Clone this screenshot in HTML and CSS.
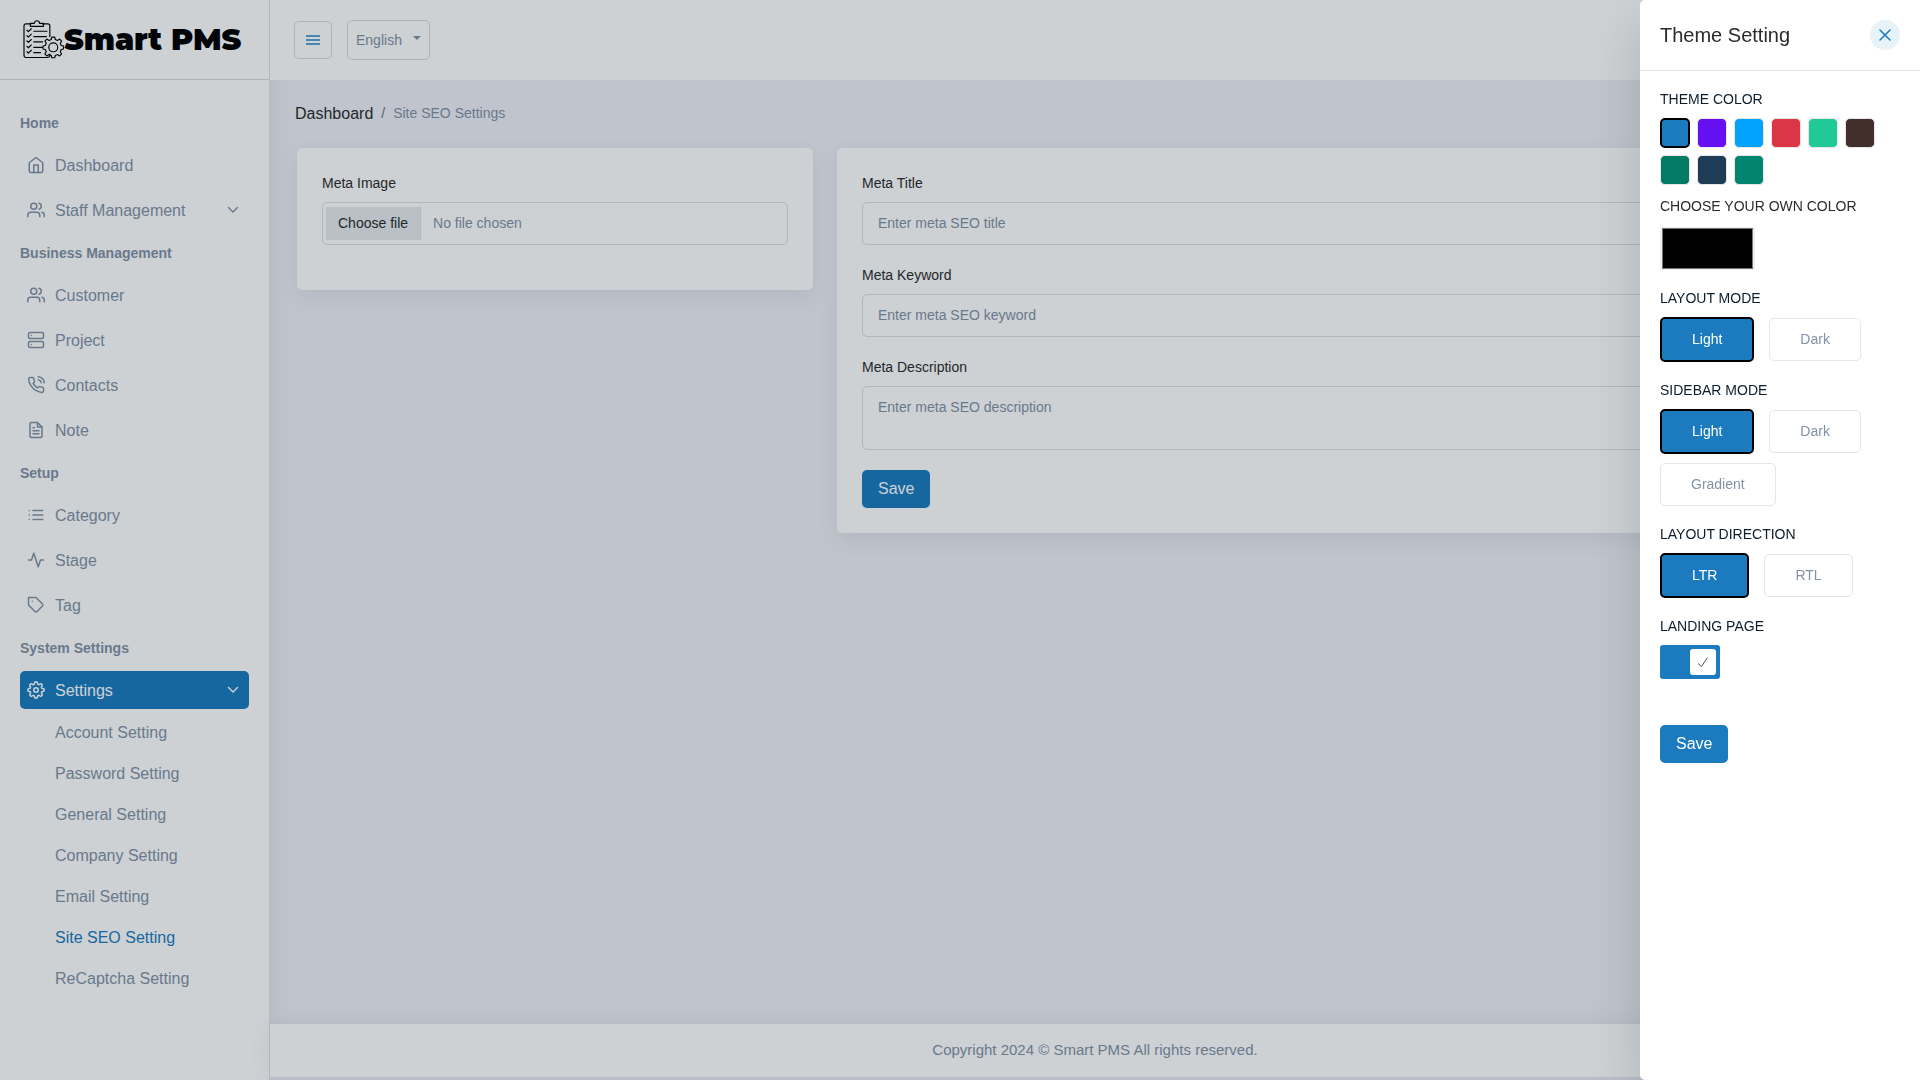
FILE: index.html
```html
<!DOCTYPE html>
<html lang="en-GB">
<head>
<meta charset="utf-8">
<meta name="viewport" content="width=device-width, initial-scale=1">
<title>Smart PMS - Site SEO Settings</title>
<link rel="stylesheet" href="styles.css">
</head>
<body>
<div class="app">
  <aside class="sidebar">
    <a class="brand" href="#">
      <svg class="brand-icon" viewBox="0 0 42 40" fill="none" stroke="currentColor" stroke-width="1.2" stroke-linejoin="round" stroke-linecap="round">
        <path d="M8 4H3Q1 4 1 6V36Q1 38.500 3 38.500H25Q27.500 38.500 27.500 36V35M20 4H25.500Q27.500 4 27.500 6V17"/>
        <path d="M7.500 6.500V3.500H11.500Q12 .8 14.300 .8T17 3.500H21V6.500Z"/>
        <path d="M4 10.500l1.500 1.500L8.500 9M4 16l1.500 1.500L8.500 14.500M4 21.500l1.500 1.500L8.500 20M4 27l1.500 1.500L8.500 25.500M4 32.500l1.500 1.500L8.500 31M11 11.500H24.500M11 17H24M11 22.500H20M11 28H20M11 33.500H18"/>
        <path d="M29.500 17.500h3l.6 2.500 2.200 1 2.300-1.400 2 2-1.400 2.300 1 2.200 2.300.6v3l-2.300.6-1 2.200 1.400 2.300-2 2-2.300-1.400-2.200 1-.6 2.300h-3l-.6-2.300-2.200-1-2.300 1.400-2-2 1.400-2.300-1-2.200-2.300-.6v-3l2.300-.6 1-2.200-1.400-2.300 2-2 2.300 1.400 2.200-1Z"/>
        <circle cx="31" cy="28" r="4.600"/>
      </svg>
      <span class="brand-name">Smart PMS</span>
    </a>
    <nav class="menu">
      <h6 class="menu-title">Home</h6>
      <a class="menu-link" href="#"><svg class="icon" viewBox="0 0 24 24"><path d="M3 9l9-7 9 7v11a2 2 0 0 1-2 2H5a2 2 0 0 1-2-2z"/><path d="M9 22V12h6v10"/></svg><span>Dashboard</span></a>
      <a class="menu-link" href="#"><svg class="icon" viewBox="0 0 24 24"><path d="M17 21v-2a4 4 0 0 0-4-4H5a4 4 0 0 0-4 4v2"/><circle cx="9" cy="7" r="4"/><path d="M23 21v-2a4 4 0 0 0-3-3.870M16 3.130a4 4 0 0 1 0 7.750"/></svg><span>Staff Management</span><svg class="chevron" viewBox="0 0 12 12"><path d="M1.500 3.500L6 8l4.500-4.500"/></svg></a>
      <h6 class="menu-title">Business Management</h6>
      <a class="menu-link" href="#"><svg class="icon" viewBox="0 0 24 24"><path d="M17 21v-2a4 4 0 0 0-4-4H5a4 4 0 0 0-4 4v2"/><circle cx="9" cy="7" r="4"/><path d="M23 21v-2a4 4 0 0 0-3-3.870M16 3.130a4 4 0 0 1 0 7.750"/></svg><span>Customer</span></a>
      <a class="menu-link" href="#"><svg class="icon" viewBox="0 0 24 24"><rect x="2" y="2" width="20" height="8" rx="2"/><rect x="2" y="14" width="20" height="8" rx="2"/><path d="M6 6h.01M6 18h.01"/></svg><span>Project</span></a>
      <a class="menu-link" href="#"><svg class="icon" viewBox="0 0 24 24"><path d="M15.050 5A5 5 0 0 1 19 8.950M15.050 1A9 9 0 0 1 23 8.940m-1 7.980v3a2 2 0 0 1-2.180 2 19.790 19.790 0 0 1-8.630-3.070 19.500 19.500 0 0 1-6-6 19.790 19.790 0 0 1-3.070-8.670A2 2 0 0 1 4.110 2h3a2 2 0 0 1 2 1.720 12.840 12.840 0 0 0 .7 2.810 2 2 0 0 1-.45 2.110L8.090 9.910a16 16 0 0 0 6 6l1.270-1.270a2 2 0 0 1 2.110-.45 12.840 12.840 0 0 0 2.810.7A2 2 0 0 1 22 16.920z"/></svg><span>Contacts</span></a>
      <a class="menu-link" href="#"><svg class="icon" viewBox="0 0 24 24"><path d="M14 2H6a2 2 0 0 0-2 2v16a2 2 0 0 0 2 2h12a2 2 0 0 0 2-2V8z"/><path d="M14 2v6h6M16 13H8M16 17H8M10 9H8"/></svg><span>Note</span></a>
      <h6 class="menu-title">Setup</h6>
      <a class="menu-link" href="#"><svg class="icon" viewBox="0 0 24 24"><path d="M8 6h13M8 12h13M8 18h13M3 6h.01M3 12h.01M3 18h.01"/></svg><span>Category</span></a>
      <a class="menu-link" href="#"><svg class="icon" viewBox="0 0 24 24"><path d="M22 12h-4l-3 9L9 3l-3 9H2"/></svg><span>Stage</span></a>
      <a class="menu-link" href="#"><svg class="icon" viewBox="0 0 24 24"><path d="M20.590 13.410l-7.170 7.170a2 2 0 0 1-2.830 0L2 12V2h10l8.590 8.590a2 2 0 0 1 0 2.820z"/><path d="M7 7h.01"/></svg><span>Tag</span></a>
      <h6 class="menu-title">System Settings</h6>
      <a class="menu-link menu-link-active" href="#"><svg class="icon" viewBox="0 0 24 24"><circle cx="12" cy="12" r="3"/><path d="M19.400 15a1.650 1.650 0 0 0 .33 1.820l.06.06a2 2 0 0 1 0 2.830 2 2 0 0 1-2.830 0l-.06-.06a1.650 1.650 0 0 0-1.820-.33 1.650 1.650 0 0 0-1 1.510V21a2 2 0 0 1-2 2 2 2 0 0 1-2-2v-.09A1.650 1.650 0 0 0 9 19.400a1.650 1.650 0 0 0-1.820.33l-.06.06a2 2 0 0 1-2.830 0 2 2 0 0 1 0-2.830l.06-.06a1.650 1.650 0 0 0 .33-1.820 1.650 1.650 0 0 0-1.510-1H3a2 2 0 0 1-2-2 2 2 0 0 1 2-2h.09A1.650 1.650 0 0 0 4.600 9a1.650 1.650 0 0 0-.33-1.820l-.06-.06a2 2 0 0 1 0-2.830 2 2 0 0 1 2.830 0l.06.06a1.650 1.650 0 0 0 1.820.33H9a1.650 1.650 0 0 0 1-1.510V3a2 2 0 0 1 2-2 2 2 0 0 1 2 2v.09a1.650 1.650 0 0 0 1 1.510 1.650 1.650 0 0 0 1.820-.33l.06-.06a2 2 0 0 1 2.830 0 2 2 0 0 1 0 2.830l-.06.06a1.650 1.650 0 0 0-.33 1.820V9a1.650 1.650 0 0 0 1.510 1H21a2 2 0 0 1 2 2 2 2 0 0 1-2 2h-.09a1.650 1.650 0 0 0-1.510 1z"/></svg><span>Settings</span><svg class="chevron" viewBox="0 0 12 12"><path d="M1.500 3.500L6 8l4.500-4.500"/></svg></a>
      <ul class="submenu">
        <li><a href="#">Account Setting</a></li>
        <li><a href="#">Password Setting</a></li>
        <li><a href="#">General Setting</a></li>
        <li><a href="#">Company Setting</a></li>
        <li><a href="#">Email Setting</a></li>
        <li><a class="current" href="#">Site SEO Setting</a></li>
        <li><a href="#">ReCaptcha Setting</a></li>
      </ul>
    </nav>
  </aside>

  <div class="page">
    <header class="topbar">
      <button class="menu-toggle" type="button" aria-label="Toggle menu"><svg viewBox="0 0 14 10"><path d="M0 1h14M0 5h14M0 9h14"/></svg></button>
      <div class="language">
        <select aria-label="Language"><option>English</option></select>
        <span class="caret"></span>
      </div>
    </header>
    <main class="content">
      <nav class="breadcrumb"><a href="#">Dashboard</a><span>/</span><small>Site SEO Settings</small></nav>
      <form class="cards">
        <section class="card">
          <div class="field">
            <label for="meta-image">Meta Image</label>
            <div class="file">
              <div class="control file-face" aria-hidden="true"><span class="file-button">Choose file</span><span>No file chosen</span></div>
              <input class="file-input" id="meta-image" type="file">
            </div>
          </div>
        </section>
        <section class="card card-wide">
          <div class="field">
            <label for="meta-title">Meta Title</label>
            <input class="control" id="meta-title" type="text" placeholder="Enter meta SEO title">
          </div>
          <div class="field">
            <label for="meta-keyword">Meta Keyword</label>
            <input class="control" id="meta-keyword" type="text" placeholder="Enter meta SEO keyword">
          </div>
          <div class="field">
            <label for="meta-description">Meta Description</label>
            <textarea class="control" id="meta-description" rows="2" placeholder="Enter meta SEO description"></textarea>
          </div>
          <button class="btn-primary" type="button">Save</button>
        </section>
      </form>
    </main>
    <footer class="footer">Copyright 2024 © Smart PMS All rights reserved.</footer>
  </div>
</div>

<div class="backdrop"></div>

<aside class="drawer">
  <header class="drawer-header">
    <h5>Theme Setting</h5>
    <button class="close" type="button" aria-label="Close"><svg viewBox="0 0 12 12"><path d="M1 1l10 10M11 1L1 11"/></svg></button>
  </header>
  <form class="drawer-body">
    <section class="option option-color">
      <h6>THEME COLOR</h6>
      <div class="swatches">
        <button class="swatch blue selected" type="button" aria-label="Blue"></button>
        <button class="swatch purple" type="button" aria-label="Purple"></button>
        <button class="swatch sky" type="button" aria-label="Sky"></button>
        <button class="swatch red" type="button" aria-label="Red"></button>
        <button class="swatch mint" type="button" aria-label="Mint"></button>
        <button class="swatch brown" type="button" aria-label="Brown"></button>
        <button class="swatch green" type="button" aria-label="Green"></button>
        <button class="swatch navy" type="button" aria-label="Navy"></button>
        <button class="swatch teal" type="button" aria-label="Teal"></button>
      </div>
    </section>
    <section class="option">
      <label class="own-label" for="own-color">CHOOSE YOUR OWN COLOR</label>
      <input class="own-color" id="own-color" type="color" value="#000000">
    </section>
    <section class="option">
      <h6>LAYOUT MODE</h6>
      <div class="choices">
        <button class="choice selected" type="button">Light</button>
        <button class="choice" type="button">Dark</button>
      </div>
    </section>
    <section class="option">
      <h6>SIDEBAR MODE</h6>
      <div class="choices">
        <button class="choice selected" type="button">Light</button>
        <button class="choice" type="button">Dark</button>
        <button class="choice" type="button">Gradient</button>
      </div>
    </section>
    <section class="option">
      <h6>LAYOUT DIRECTION</h6>
      <div class="choices">
        <button class="choice selected" type="button">LTR</button>
        <button class="choice" type="button">RTL</button>
      </div>
    </section>
    <section class="option option-landing">
      <h6><label for="landing">LANDING PAGE</label></h6>
      <input class="switch" id="landing" type="checkbox" checked>
    </section>
    <button class="btn-primary" type="button">Save</button>
  </form>
</aside>
</body>
</html>
```
FILE: styles.css
```css
:root {
  --primary: #1b7bbe;
  --muted: #8392a5;
  --ink: #2b2b2b;
  --line: #e6e6e6;
}

* { box-sizing: border-box; }

body {
  margin: 0;
  font: 14px/21px "Liberation Sans", Arial, sans-serif;
  color: var(--ink);
  background: #efeff5;
}

button, input, select, textarea { font: inherit; }
h5, h6 { margin: 0; font-weight: 400; }
a { color: inherit; text-decoration: none; }

.app { display: flex; min-height: 100vh; }

/* Sidebar */
.sidebar {
  flex: 0 0 270px;
  background: #fff;
  border-right: 1px solid #e3e3e3;
  box-shadow: 0 0 21px rgba(89, 102, 122, .1);
}

.brand {
  display: flex;
  align-items: center;
  height: 80px;
  padding: 0 23px;
  border-bottom: 1px solid #dadada;
  color: #000;
}

.brand-icon { flex: none; width: 41px; height: 39px; }
.brand-name { font: 900 30px/40px Montserrat, Inter, "Liberation Sans", sans-serif; white-space: nowrap; }

.menu {
  display: flex;
  flex-direction: column;
  gap: 7px;
  padding: 26px 20px;
  color: var(--muted);
}

.menu-title { padding-top: 2px; font-size: 14px; font-weight: 700; line-height: 31px; }

.menu-link {
  display: flex;
  align-items: center;
  gap: 10px;
  height: 38px;
  padding: 0 10px 0 7px;
  border-radius: 5px;
  font-size: 16px;
}

.menu-link span { flex: 1; }
.menu-link-active { background: var(--primary); color: #fff; }

.icon, .chevron {
  flex: none;
  width: 18px;
  height: 18px;
  fill: none;
  stroke: currentColor;
  stroke-width: 2;
  stroke-linecap: round;
  stroke-linejoin: round;
}

.chevron { width: 12px; height: 12px; stroke-width: 1.400; }

.submenu { margin: -4px 0 0; padding: 0 0 0 35px; list-style: none; font-size: 16px; line-height: 41px; }
.submenu .current { color: var(--primary); }

/* Page */
.page { flex: 1; min-width: 0; display: flex; flex-direction: column; }

.topbar {
  display: flex;
  align-items: center;
  gap: 15px;
  height: 80px;
  padding: 0 24px;
  background: #fff;
}

.menu-toggle {
  display: grid;
  place-items: center;
  width: 38px;
  height: 38px;
  padding: 0;
  background: none;
  border: 1px solid #dadada;
  border-radius: 5px;
}

.menu-toggle svg { width: 14px; height: 10px; stroke: #5aa3d4; stroke-width: 2; }

.language { display: grid; align-items: center; }
.language > * { grid-area: 1 / 1; }

.language select {
  appearance: none;
  width: 83px;
  height: 40px;
  padding: 0 8px;
  color: var(--muted);
  background: none;
  border: 1px solid #dadada;
  border-radius: 5px;
}

.caret {
  justify-self: end;
  margin: 0 9px 4px 0;
  border: 4px solid transparent;
  border-top-color: var(--muted);
  border-bottom: 0;
  pointer-events: none;
}

.content { flex: 1; padding: 21px 27px; }

.breadcrumb {
  display: flex;
  align-items: center;
  gap: 8px;
  height: 24px;
  margin: 0 -2px 23px;
  font-size: 16px;
}

.breadcrumb span, .breadcrumb small { font-size: 14px; color: var(--muted); }
.breadcrumb span { color: #6c757d; }

.cards {
  display: grid;
  grid-template-columns: repeat(3, 1fr);
  align-items: start;
  gap: 24px;
}

.card {
  padding: 25px;
  background: #fff;
  border-radius: 5px;
  box-shadow: 0 7px 20px rgba(89, 102, 122, .1);
}

.card-wide { grid-column: span 2; }
.field { display: flex; flex-direction: column; gap: 8px; margin-bottom: 20px; }

.control {
  width: 100%;
  height: 43px;
  padding: 0 15px 2px;
  color: var(--ink);
  background: #fff;
  border: 1px solid #dfdfdf;
  border-radius: 5px;
}

.control::placeholder { color: var(--muted); }
textarea.control { display: block; height: 64px; padding: 10px 15px; resize: none; }

/* The native file input lies invisibly over its styled face */
.file { display: grid; }
.file > * { grid-area: 1 / 1; }
.file-input { width: 100%; height: 43px; opacity: 0; }

.file-face {
  display: flex;
  gap: 12px;
  padding: 4px 3px;
  line-height: 33px;
  color: var(--muted);
}

.file-button {
  padding: 0 12px;
  color: var(--ink);
  background: #e6ecee;
  border-right: 1px solid #dfdfdf;
}

.btn-primary {
  height: 38px;
  padding: 0 16px 2px;
  font-size: 16px;
  color: #fff;
  background: var(--primary);
  border: 0;
  border-radius: 5px;
}

.footer {
  margin-bottom: 3px;
  padding: 15px 16px 17px;
  background: #fff;
  box-shadow: 0 0 21px rgba(89, 102, 122, .1);
  font-size: 15px;
  text-align: center;
  color: var(--muted);
}

/* Theme drawer */
.backdrop { position: fixed; inset: 0; background: rgba(5, 25, 40, .2); }

.drawer {
  position: fixed;
  inset: 0 0 0 auto;
  width: 280px;
  overflow-y: auto;
  background: #fff;
  border-radius: 5px 0 0 5px;
  box-shadow: 0 25px 50px rgba(8, 21, 26, .16);
}

.drawer-header {
  display: flex;
  align-items: center;
  justify-content: space-between;
  padding: 20px;
  border-bottom: 1px solid #e0e0e0;
}

.drawer-header h5 { font-size: 20px; line-height: 30px; }

.close {
  display: grid;
  place-items: center;
  width: 30px;
  height: 30px;
  padding: 0;
  background: #e8f2f9;
  border: 0;
  border-radius: 50%;
}

.close svg { width: 12px; height: 12px; stroke: var(--primary); stroke-width: 1.500; stroke-linecap: round; }

.drawer-body { padding: 18px 20px; }
.option { margin-bottom: 18px; }
.option-color { margin-bottom: 11px; }
.option-landing { margin-bottom: 46px; }
.option h6 { margin-bottom: 8px; font-size: 14px; color: #0d1d2b; }

.swatches { display: flex; flex-wrap: wrap; align-items: center; gap: 7px; }

.swatch { width: 30px; height: 30px; padding: 0; border: 1px solid #e6e6e6; border-radius: 5px; }
.swatch.selected { border: 2px solid #000; }
.blue { background: #1b7bbe; }
.purple { background: #6610f2; }
.sky { background: #02a2ff; }
.red { background: #dc3545; }
.mint { background: #20c997; }
.brown { background: #412d29; }
.green { background: #027a64; }
.navy { background: #1f3c56; }
.teal { background: #018571; }

.own-label { display: block; margin-bottom: 10px; }

.own-color {
  display: block;
  width: 95px;
  height: 43px;
  padding: 1px 2px;
  background: #efefef;
  border: 0;
}

.own-color::-webkit-color-swatch-wrapper { padding: 0; }
.own-color::-webkit-color-swatch { border: 1px solid #777; }

.choices { display: flex; flex-wrap: wrap; align-items: center; gap: 9px 15px; }

.choice {
  height: 43px;
  padding: 0 30px;
  color: var(--muted);
  background: #fff;
  border: 1px solid var(--line);
  border-radius: 5px;
}

.choice.selected { height: 45px; color: #fff; background: var(--primary); border: 2px solid #000; }

.switch {
  appearance: none;
  display: flex;
  justify-content: flex-end;
  width: 60px;
  height: 34px;
  margin: 0;
  padding: 4px;
  background: var(--primary);
  border-radius: 3px;
}

.switch::before {
  content: "";
  width: 26px;
  border-radius: 3px;
  background: #fff url("data:image/svg+xml,%3Csvg xmlns='http://www.w3.org/2000/svg' width='12' height='12' fill='none' stroke='%23555'%3E%3Cpath d='M1 7.500L4.500 10.500L10.500 1.500'/%3E%3C/svg%3E") center no-repeat;
}
```
